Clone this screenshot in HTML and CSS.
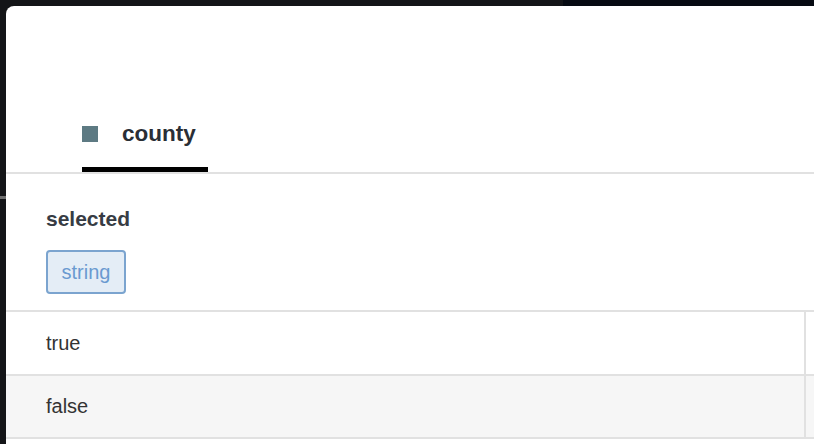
FILE: index.html
```html
<!DOCTYPE html>
<html>
<head>
<meta charset="utf-8">
<link rel="stylesheet" href="styles.css">
</head>
<body>
<div class="edge-mark"></div>
<main class="panel">
  <nav class="tabs">
    <div class="tab active">
      <span class="swatch"></span>
      <span class="tab-label">county</span>
    </div>
  </nav>
  <section class="field">
    <h2 class="field-name">selected</h2>
    <span class="type-badge">string</span>
  </section>
  <div class="table">
    <div class="row">
      <div class="cell main">true</div>
      <div class="cell rest"></div>
    </div>
    <div class="row alt">
      <div class="cell main">false</div>
      <div class="cell rest"></div>
    </div>
  </div>
</main>
</body>
</html>
```
FILE: styles.css
```css
html, body {
  margin: 0;
  padding: 0;
  height: 100%;
  overflow: hidden;
}
body {
  background: linear-gradient(to right, #141518 0, #141518 563px, #060a12 563px);
  font-family: "Liberation Sans", Arial, Helvetica, sans-serif;
  padding: 6px 0 0 6px;
  box-sizing: border-box;
  position: relative;
}
.edge-mark {
  position: absolute;
  left: 0;
  top: 196px;
  width: 6px;
  height: 3px;
  background: #6f6f6f;
}
.panel {
  background: #fff;
  border-top-left-radius: 8px;
  height: 100%;
}
.tabs {
  height: 166px;
  border-bottom: 2px solid #e1e1e1;
  display: flex;
  align-items: flex-end;
  padding-left: 76px;
}
.tab {
  display: flex;
  align-items: center;
  gap: 24px;
  padding: 0 12px 20px 0;
  border-bottom: 5px solid #000;
}
.swatch {
  width: 16px;
  height: 16px;
  background: #5d7a83;
}
.tab-label {
  font-size: 22.5px;
  font-weight: bold;
  color: #2a2e35;
  line-height: 26px;
}
.field {
  padding: 34px 0 16px 40px;
  display: flex;
  flex-direction: column;
  align-items: flex-start;
}
.field-name {
  margin: 0;
  font-size: 21px;
  font-weight: bold;
  color: #373c44;
  line-height: 22px;
}
.type-badge {
  margin-top: 20px;
  box-sizing: border-box;
  width: 80px;
  height: 44px;
  display: flex;
  align-items: center;
  justify-content: center;
  border: 2px solid #7ba4cf;
  border-radius: 4px;
  background: #e4edf6;
  color: #6a9ad0;
  font-size: 20px;
}
.table {
  border-top: 2px solid #e1e1e1;
}
.row {
  display: flex;
  height: 62px;
  border-bottom: 2px solid #e1e1e1;
}
.row.alt {
  background: #f6f6f6;
  height: 61px;
}
.cell {
  display: flex;
  align-items: center;
  font-size: 20px;
  color: #333;
}
.cell.main {
  width: 758px;
  padding-left: 40px;
  border-right: 2px solid #e1e1e1;
}
.cell.rest {
  flex: 1;
}
```
